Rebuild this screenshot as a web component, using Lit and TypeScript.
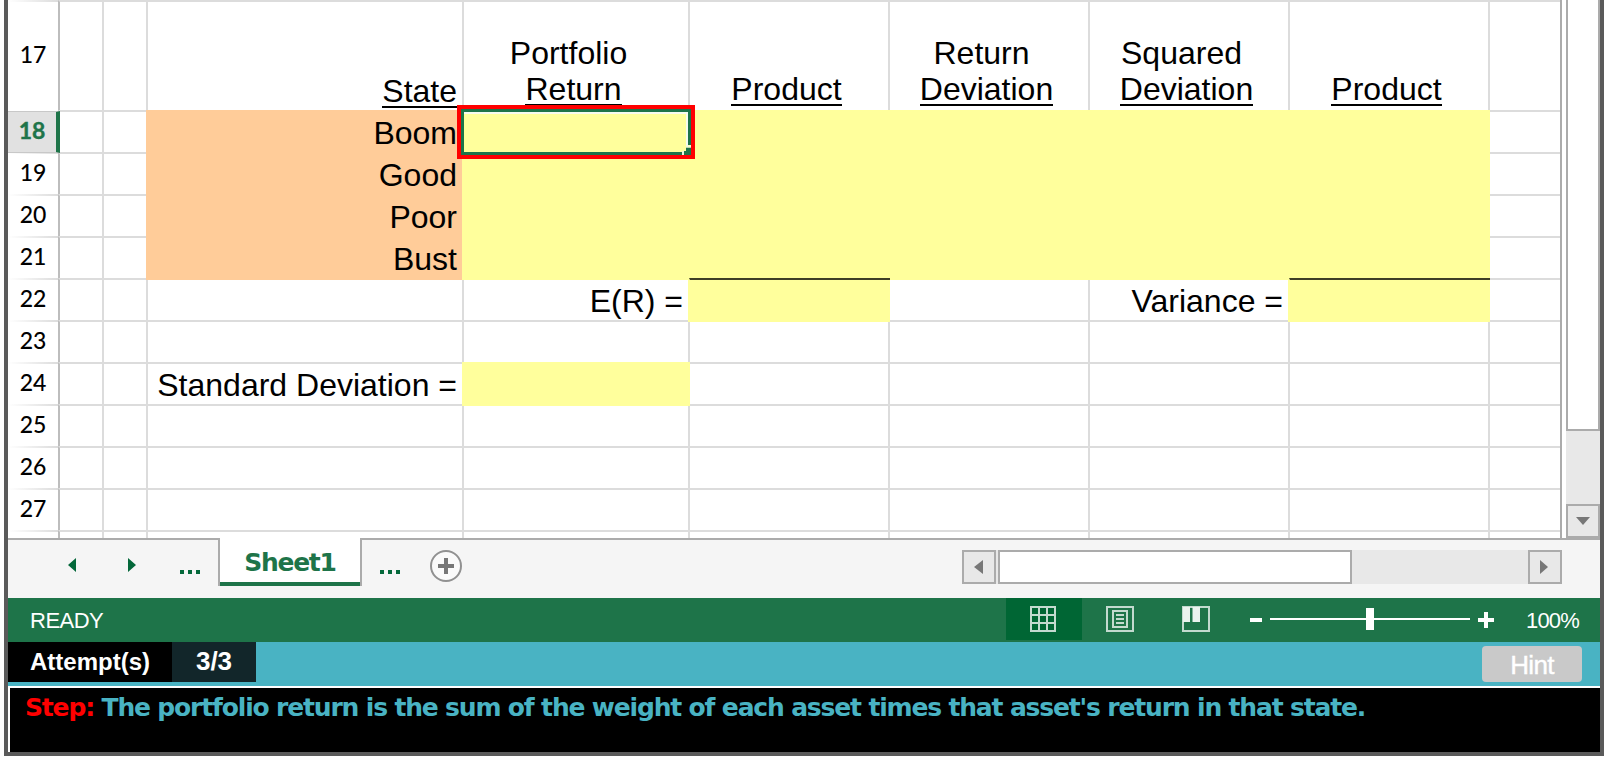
import { LitElement, html, css } from "lit";
import { customElement } from "lit/decorators.js";

type Cell = { text?: unknown; cls?: string };

const COLS = 9;

const ROWS: { n: number; cells: Record<number, Cell> }[] = [
  {
    n: 17,
    cells: {
      2: { text: html`<span class="u">State</span>`, cls: "right state" },
      3: { text: html`<span class="l1 s10">Portfolio</span><span class="u">Return</span>`, cls: "head" },
      4: { text: html`<span class="u">Product</span>`, cls: "head" },
      5: { text: html`<span class="l1 s10">Return</span><span class="u">Deviation</span>`, cls: "head" },
      6: { text: html`<span class="l1 s10">Squared</span><span class="u">Deviation</span>`, cls: "head" },
      7: { text: html`<span class="u">Product</span>`, cls: "head" },
    },
  },
  ...["Boom", "Good", "Poor", "Bust"].map((s, i) => ({
    n: 18 + i,
    cells: {
      2: { text: s, cls: "right orange" },
      3: { cls: i === 0 ? "yellow selected" : "yellow" },
      4: { cls: "yellow" },
      5: { cls: "yellow" },
      6: { cls: "yellow" },
      7: { cls: "yellow" },
    } as Record<number, Cell>,
  })),
  {
    n: 22,
    cells: {
      3: { text: "E(R) =", cls: "right" },
      4: { cls: "yellow total" },
      6: { text: "Variance =", cls: "right" },
      7: { cls: "yellow total" },
    },
  },
  { n: 23, cells: {} },
  { n: 24, cells: { 2: { text: "Standard Deviation =", cls: "right" }, 3: { cls: "yellow" } } },
  { n: 25, cells: {} },
  { n: 26, cells: {} },
  { n: 27, cells: {} },
];

@customElement("sheet-grid")
class SheetGrid extends LitElement {
  static styles = css`
    :host { display: block; width: 1554px; height: 538px; overflow: hidden; border-right: 2px solid #ababab; box-sizing: border-box; }
    .grid {
      display: grid;
      grid-template-columns: 50px 44px 44px 316px 226px 200px 200px 200px 200px 72px;
      grid-template-rows: 110px repeat(10, 42px) 8px;
      font: 32px/36px "Liberation Sans", Arial, sans-serif;
      color: #000;
    }
    .num {
      display: flex; align-items: center; justify-content: center;
      padding-bottom: 2px;
      font: 500 23px/28px Lato, sans-serif;
      background: linear-gradient(90deg, #fff, #dcdcdc) top / 100% 2px no-repeat;
    }
    .num.on {
      margin-top: 1px; z-index: 2; margin-right: -2px; margin-bottom: -1px;
      background: #e1e1e1; color: #1e7449; font-weight: 700;
      -webkit-text-stroke: 0.4px #1e7449;
      border-right: 4px solid #1e7449; border-top: 1px solid #c8c8c8;
      border-bottom: 1px solid #c8c8c8; padding-right: 0; padding-bottom: 4px;
    }
    .cell {
      border-left: 2px solid #dcdcdc; border-top: 2px solid #dcdcdc;
      display: flex; align-items: flex-end; min-width: 0; white-space: nowrap;
    }
    .cell.first { border-left-color: #bdbdbd; }
    .right { justify-content: flex-end; padding-right: 5px; padding-bottom: 1px; }
    .right.state { padding-bottom: 2px; }
    .head { flex-direction: column; align-items: center; justify-content: flex-end; padding-bottom: 4px; padding-right: 5px; }
    .u { border-bottom: 2px solid #000; line-height: 32px; height: 31px; }
    .l1 { line-height: 36px; height: 38px; }
    .s10 { padding-right: 10px; }
    .yellow, .orange { z-index: 1; margin: 0 -2px -2px 0; }
    .yellow { background: #ffff9c; border-color: #ffff9c; }
    .orange { background: #ffcc99; border-color: #ffcc99; padding-right: 7px; padding-bottom: 3px; }
    .total { border-top-color: #3f3f26; border-left-width: 1px; margin-left: 1px; box-shadow: -1px 0 #ffff9c; }
    .selected { z-index: 4; position: relative; }
    .ring {
      position: absolute; left: -7px; top: -7px; width: 230px; height: 46px;
      border: 4px solid #f00;
    }
    .ring svg { display: block; }
  `;

  render() {
    return html`<div class="grid">
      ${ROWS.map(
        (r) => html`<div class="num ${r.n === 18 ? "on" : ""}">${r.n}</div>
          ${Array.from({ length: COLS }, (_, i) => {
            const c = r.cells[i] ?? {};
            return html`<div class="cell ${i === 0 ? "first" : ""} ${c.cls ?? ""}">${c.text ?? ""}${
              c.cls?.includes("selected")
                ? html`<div class="ring"><svg width="230" height="46" viewBox="0 0 230 46">
                    <path d="M3 4H226V37" fill="none" stroke="#f6fbf0" stroke-width="2" />
                    <path d="M0 0H230V36H227V3H3V43H221V46H0Z" fill="#1e7449" />
                    <path d="M225 38.500H230V46H223V42H225Z" fill="#1e7449" />
                    <path d="M225 37.500H230M222 42V46" stroke="#f0f7e0" stroke-width="2" />
                  </svg></div>`
                : ""
            }</div>`;
          })}`
      )}
      <div class="num"></div>
      ${Array.from({ length: COLS }, (_, i) => html`<div class="cell ${i === 0 ? "first" : ""}"></div>`)}
    </div>`;
  }
}

const arrow = (d: string) =>
  html`<svg width="14" height="14" viewBox="0 0 14 14"><path d=${d} fill="#777" /></svg>`;

@customElement("app-root")
class AppRoot extends LitElement {
  static styles = css`
    :host { display: block; width: 1612px; height: 764px; background: #fff; overflow: hidden; }
    .frame {
      width: 1592px; height: 752px; margin-left: 4px;
      border: 4px solid #5a5a5a; border-top: 0;
      display: flex; flex-direction: column;
    }
    .top { display: flex; height: 538px; flex: none; }
    .vbar { margin-left: 4px; width: 34px; display: flex; flex-direction: column; background: #e8e8e8; }
    .vthumb { height: 431px; box-sizing: border-box; background: #fff; border: 2px solid #ababab; border-top: 0; }
    .btn { box-sizing: border-box; width: 34px; height: 34px; border: 2px solid #ababab; background: #e8e8e8; display: flex; align-items: center; justify-content: center; }
    .down { margin-top: auto; }
    .tabs { flex: none; height: 60px; background: #f5f5f5; display: flex; align-items: flex-start; font: 700 25px/30px "DejaVu Sans", sans-serif; }
    .pre { width: 210px; height: 60px; box-sizing: border-box; border-top: 2px solid #ababab; display: flex; }
    .pre svg, .post svg { display: block; }
    .tab {
      width: 144px; height: 48px; box-sizing: border-box; background: #fff; text-align: center; color: #1e7449;
      border-left: 2px solid #ababab; border-right: 2px solid #ababab; padding-top: 10px;
      box-shadow: inset 0 -4px #1e7449; letter-spacing: -1.3px;
    }
    .post { flex: 1; height: 60px; box-sizing: border-box; border-top: 2px solid #ababab; display: flex; align-items: flex-start; }
    .hbar { display: flex; margin: 10px 38px 0 auto; width: 600px; background: #e8e8e8; }
    .hthumb { box-sizing: border-box; width: 354px; height: 34px; background: #fff; border: 2px solid #ababab; margin-left: 2px; }
    .hbar .rt { margin-left: auto; }
    .status { flex: none; height: 44px; background: #1e7449; color: #fff; display: flex; align-items: flex-start; font: 22px/45px "Liberation Sans", Arial, sans-serif; letter-spacing: -0.5px; }
    .ready { margin-left: 22px; flex: 1; }
    .status svg { display: block; }
    .zoom { width: 74px; letter-spacing: -0.8px; }
    .attempt { flex: none; height: 44px; background: #49b3c3; display: flex; color: #fff; border-bottom: 2px solid #fff; font: 700 24px/39px "Liberation Sans", Arial, sans-serif; }
    .att { width: 164px; height: 40px; box-sizing: border-box; background: #000; padding-left: 22px; }
    .cnt { width: 84px; height: 40px; background: #12262a; text-align: center; font-size: 26px; line-height: 38px; }
    .hint { margin: 4px 18px 0 auto; width: 100px; height: 36px; border-radius: 4px; background: #c9c9c9; text-align: center; font: 26px/38px "Liberation Sans", Arial, sans-serif; letter-spacing: -0.7px; -webkit-text-stroke: 0.4px #fff; }
    .step {
      flex: 1; background: #000; border-left: 2px solid #fff; color: #49b3c3; padding-left: 15px; white-space: nowrap;
      font: 700 25px/39px "DejaVu Sans", sans-serif; letter-spacing: -1.17px;
    }
    .red { color: #f00; }
  `;

  render() {
    return html`<div class="frame">
      <div class="top">
        <sheet-grid></sheet-grid>
        <div class="vbar">
          <div class="vthumb"></div>
          <div class="btn down">${arrow("M0 3H14L7 11Z")}</div>
        </div>
      </div>
      <div class="tabs">
        <div class="pre">
          <svg width="210" height="58" viewBox="8 540 210 58">
            <path d="M76 558V572L68 565ZM128 558V572L136 565Z" fill="#04683a" />
            <path d="M180 570h4v4h-4zM188 570h4v4h-4zM196 570h4v4h-4z" fill="#04683a" />
          </svg>
        </div>
        <div class="tab">Sheet1</div>
        <div class="post">
          <svg width="130" height="58" viewBox="362 540 130 58">
            <path d="M380 570h4v4h-4zM388 570h4v4h-4zM396 570h4v4h-4z" fill="#04683a" />
            <circle cx="446" cy="566" r="15" fill="#fafafa" stroke="#919191" stroke-width="2" />
            <path d="M446 558V574M438 566H454" stroke="#777" stroke-width="4" />
          </svg>
          <div class="hbar">
            <div class="btn">${arrow("M11 0V14L2 7Z")}</div>
            <div class="hthumb"></div>
            <div class="btn rt">${arrow("M2 0V14L10 7Z")}</div>
          </div>
        </div>
      </div>
      <div class="status">
        <div class="ready">READY</div>
        <svg width="520" height="44" viewBox="1006 598 520 44">
          <rect x="1006" y="598" width="76" height="42" fill="#006634" />
          <g fill="none" stroke="#c3dacf" stroke-width="2">
            <path d="M1031 607H1055V631H1031ZM1039 607V631M1047 607V631M1031 615H1055M1031 623H1055" />
            <path d="M1107 607H1133V631H1107ZM1113 611H1127V627H1113ZM1116 615H1124M1116 619H1124M1116 623H1124" />
            <path d="M1183 607H1209V631H1183Z" />
          </g>
          <path d="M1183 607H1190V622H1183ZM1192.500 607H1200V622H1192.500Z" fill="#eaf3ee" />
          <path d="M1250 618h12v4h-12zM1270 618h200v2h-200zM1366 608h8v22h-8zM1478 618h6v-6h4v6h6v4h-6v6h-4v-6h-6z" fill="#fff" />
        </svg>
        <div class="zoom">100%</div>
      </div>
      <div class="attempt">
        <div class="att">Attempt(s)</div>
        <div class="cnt">3/3</div>
        <div class="hint">Hint</div>
      </div>
      <div class="step"><span class="red">Step:</span> <span>The portfolio return is the sum of the weight of each asset times that asset's return in that state.</span></div>
    </div>`;
  }
}
